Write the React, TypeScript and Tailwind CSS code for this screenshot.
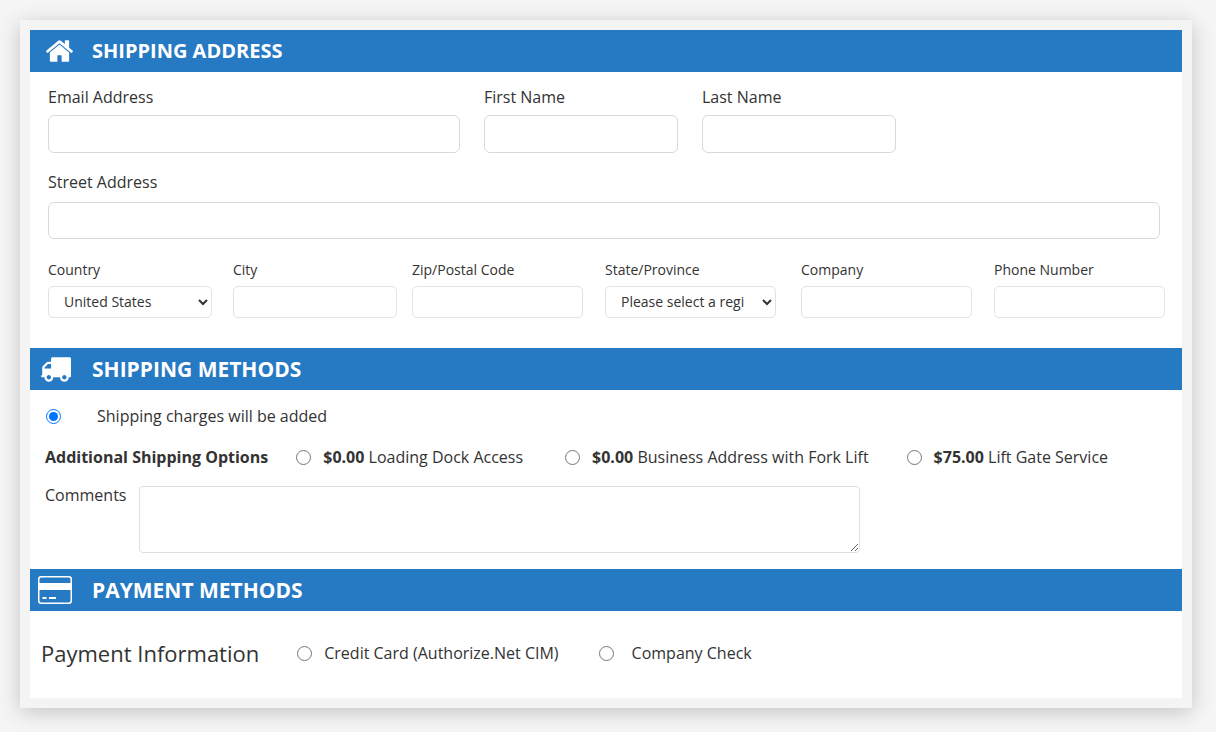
import { useId } from "react";
import type { ReactNode } from "react";
import clsx from "clsx";

const HomeIcon = () => (
  <svg viewBox="89 253 1614 1283" className="h-[22px] w-[27px]" fill="currentColor" aria-hidden="true">
    <path d="M1472 992v480q0 26-19 45t-45 19h-384v-384h-256v384h-384q-26 0-45-19t-19-45v-480q0-1 .5-3t.5-3l575-474 575 474q1 2 1 6zm223-69l-62 74q-8 9-21 11h-3q-13 0-21-7l-692-577-692 577q-12 8-24 7-13-2-21-11l-62-74q-8-10-7-23.5t11-21.5l719-599q32-26 76-26t76 26l244 204v-195q0-14 9-23t23-9h192q14 0 23 9t9 23v408l219 182q10 8 11 21.5t-7 23.5z" />
  </svg>
);

const TruckIcon = () => (
  <svg viewBox="0 256 1792 1408" className="h-[25px] w-[31px]" fill="currentColor" aria-hidden="true">
    <path d="M640 1408q0-52-38-90t-90-38-90 38-38 90 38 90 90 38 90-38 38-90zm-384-512h384v-256h-158q-13 0-22 9l-195 195q-9 9-9 22v30zm1280 512q0-52-38-90t-90-38-90 38-38 90 38 90 90 38 90-38 38-90zm256-1088v1024q0 15-4 26.5t-13.5 18.5-16.5 11.5-23.5 6-22.5 2-25.5 0-22.5-.5q0 106-75 181t-181 75-181-75-75-181h-384q0 106-75 181t-181 75-181-75-75-181h-64q-3 0-22.5.5t-25.5 0-22.5-2-23.5-6-16.5-11.5-13.5-18.5-4-26.5q0-26 19-45t45-19v-320q0-8-.5-35t0-38 2.5-34.5 6.5-37 14-30.5 22.5-30l198-198q19-19 50.5-32t58.5-13h160v-192q0-26 19-45t45-19h1024q26 0 45 19t19 45z" />
  </svg>
);

const CardIcon = () => (
  <svg viewBox="0 0 34 28" className="h-[28px] w-[34px]" fill="none" aria-hidden="true">
    <rect x="0.75" y="0.75" width="32.5" height="26.5" rx="2.5" stroke="currentColor" strokeWidth="1.5" />
    <path d="M1 7h32v7H1zM4.5 21H8.5v2H4.5zM11 21h7v2h-7z" fill="currentColor" />
  </svg>
);

type SectionHeaderProps = {
  title: string;
  icon: ReactNode;
  iconClassName: string;
  titleClassName?: string;
};

const SectionHeader = ({ title, icon, iconClassName, titleClassName = "text-[21px]" }: SectionHeaderProps) => (
  <header className="flex h-[42px] items-center bg-[#2679c3] text-white">
    <span className={clsx("w-[62px] shrink-0", iconClassName)}>{icon}</span>
    <h2 className={clsx("font-bold leading-6", titleClassName)}>{title}</h2>
  </header>
);

type FieldProps = {
  label: string;
  type?: string;
  small?: boolean;
  options?: string[];
  className?: string;
  controlClassName?: string;
};

const Field = ({ label, type = "text", small, options, className, controlClassName = "mt-[6px] h-[38px]" }: FieldProps) => {
  const id = useId();
  const control = clsx(
    "block w-full min-w-0 border bg-white",
    small
      ? "mt-[6px] h-8 rounded-[5px] border-[#e2e2e2] text-[14px]"
      : clsx("rounded-[6px] border-[#d9d9d9] px-3 text-[16px]", controlClassName),
  );

  return (
    <div className={clsx("min-w-0", className)}>
      <label htmlFor={id} className={clsx("block", small ? "text-[14px] leading-5" : "text-[16px] leading-6")}>
        {label}
      </label>
      {options ? (
        <select id={id} className={clsx(control, "pr-[15px] pb-[2px] pl-[11px]")}>
          {options.map((option) => (
            <option key={option}>{option}</option>
          ))}
        </select>
      ) : (
        <input id={id} type={type} className={clsx(control, small && "px-3")} />
      )}
    </div>
  );
};

type RadioProps = {
  name: string;
  price?: string;
  label: string;
  defaultChecked?: boolean;
  className: string;
};

const Radio = ({ name, price, label, defaultChecked, className }: RadioProps) => (
  <label className={clsx("flex items-center whitespace-nowrap", className)}>
    <input type="radio" name={name} defaultChecked={defaultChecked} className="size-[15px] shrink-0 accent-[#0075ff]" />
    <span>
      {price && <strong className="font-bold">{price}</strong>} {label}
    </span>
  </label>
);

export default function App() {
  return (
    <div className="min-h-screen bg-[#f5f5f5] pt-5 pr-6 pb-6 pl-5 font-['Open_Sans','Noto_Sans',sans-serif] text-[16px] leading-6 text-[#333]">
      <main className="bg-[#f4f4f4] p-[10px] shadow-[0_4px_20px_rgba(0,0,0,0.2)]">
        <form className="bg-white" onSubmit={(event) => event.preventDefault()}>
          <section className="pb-[30px]">
            <SectionHeader
              title="SHIPPING ADDRESS"
              icon={<HomeIcon />}
              iconClassName="pl-4"
              titleClassName="text-[20px]"
            />
            <div className="grid grid-cols-[412fr_194fr_194fr_240fr] gap-x-6 pt-[13px] pr-[22px] pl-[18px]">
              <Field label="Email Address" type="email" />
              <Field label="First Name" />
              <Field label="Last Name" />
            </div>
            <Field label="Street Address" className="mt-[17px] mr-[22px] ml-[18px]" controlClassName="mt-2 h-[37px]" />
            <div className="mt-[21px] mr-[17px] ml-[18px] flex">
              <div className="grid flex-[349] grid-cols-2 gap-x-[21px]">
                <Field small label="Country" options={["United States", "Canada"]} />
                <Field small label="City" />
              </div>
              <div className="ml-[15px] grid flex-[364] grid-cols-2 gap-x-[22px]">
                <Field small label="Zip/Postal Code" />
                <Field small label="State/Province" options={["Please select a region, state or province"]} />
              </div>
              <div className="ml-[25px] grid flex-[364] grid-cols-2 gap-x-[22px]">
                <Field small label="Company" />
                <Field small label="Phone Number" type="tel" />
              </div>
            </div>
          </section>

          <section className="pb-4">
            <SectionHeader title="SHIPPING METHODS" icon={<TruckIcon />} iconClassName="pl-[10px]" />
            <div className="pt-[14px] pl-[15px]">
              <Radio name="method" label="Shipping charges will be added" defaultChecked className="ml-px gap-[36px]" />
              <fieldset className="mt-[17px] flex items-center">
                <legend className="float-left mr-7 font-bold whitespace-nowrap">Additional Shipping Options</legend>
                <Radio name="extra" price="$0.00" label="Loading Dock Access" className="mr-[42px] gap-3" />
                <Radio name="extra" price="$0.00" label="Business Address with Fork Lift" className="mr-[38px] gap-3" />
                <Radio name="extra" price="$75.00" label="Lift Gate Service" className="gap-3" />
              </fieldset>
              <div className="mt-[17px] flex items-start">
                <label htmlFor="comments" className="mr-[13px] -mt-[3px]">
                  Comments
                </label>
                <textarea id="comments" className="h-[67px] w-19/30 rounded-[4px] border border-[#e0e0e0] px-3 py-1" />
              </div>
            </div>
          </section>

          <section>
            <SectionHeader title="PAYMENT METHODS" icon={<CardIcon />} iconClassName="pl-2" />
            <div className="flex items-center pt-[26px] pb-[29px] pl-[11px]">
              <h3 className="mr-[38px] text-[22px] leading-8 whitespace-nowrap">Payment Information</h3>
              <Radio name="payment" label="Credit Card (Authorize.Net CIM)" className="mr-10 gap-3" />
              <Radio name="payment" label="Company Check" className="gap-[18px]" />
            </div>
          </section>
        </form>
      </main>
    </div>
  );
}
